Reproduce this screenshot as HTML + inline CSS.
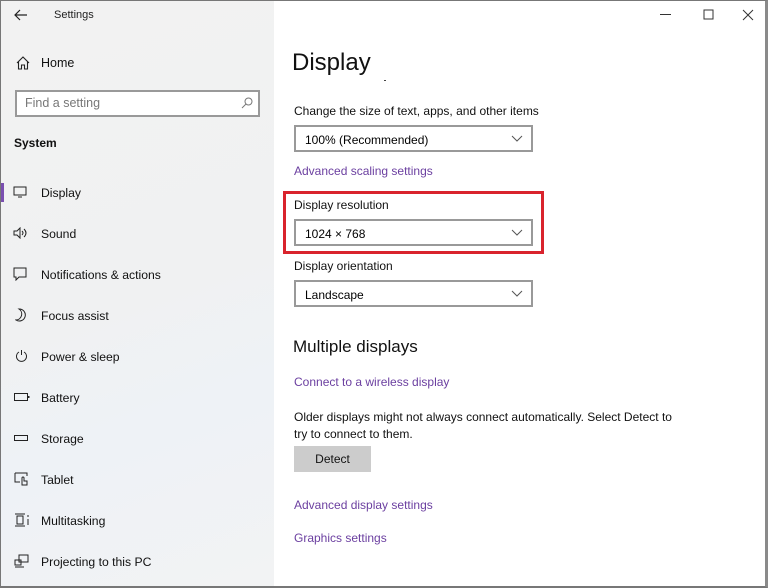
<!DOCTYPE html>
<html><head><style>
*{margin:0;padding:0;box-sizing:border-box}
body{width:768px;height:588px;overflow:hidden;font-family:"Liberation Sans",sans-serif;background:#fff;position:relative;color:#000}
.frame{position:absolute;inset:0;border:1px solid #777;border-right:3px solid #8a8a8a;border-bottom:2px solid #777}
.side{position:absolute;left:1px;top:1px;width:273px;height:585px;background:linear-gradient(160deg,#f2f2f2 0%,#f0f1f2 50%,#eef2f6 70%,#f2f3f4 100%)}
.t{position:absolute;white-space:nowrap}
.nav{position:absolute;left:41px;font-size:12.2px;color:#111}
.ic{position:absolute;left:13px}
.search{position:absolute;left:15px;top:90px;width:245px;height:27px;border:2px solid #999;background:#fff}
.dd{position:absolute;left:294px;width:239px;height:27px;border:2px solid #999;background:#fff;font-size:12px;padding:6px 0 0 9px}
.dd svg{position:absolute;right:8px;top:8px}
.link{position:absolute;left:294px;font-size:12px;color:#6b3fa0}
.lab{position:absolute;left:294px;font-size:12px;color:#111}
</style></head><body>
<div class="side"></div>
<div class="frame"></div>
<svg class="t" style="left:14px;top:9px" width="14" height="12" viewBox="0 0 14 12"><path d="M13 6H1M6 1L1 6l5 5" fill="none" stroke="#222" stroke-width="1.2"/></svg>
<div class="t" style="left:54px;top:9px;font-size:11px;color:#222">Settings</div>
<svg class="t" style="left:660px;top:14px" width="12" height="2"><rect width="11" height="1" fill="#333"/></svg>
<svg class="t" style="left:703px;top:9px" width="12" height="12"><rect x="1" y="1" width="9" height="9" fill="none" stroke="#333"/></svg>
<svg class="t" style="left:742px;top:9px" width="12" height="12"><path d="M1 1l10 10M11 1L1 11" stroke="#333"/></svg>

<svg class="ic" style="top:56px;left:16px" width="14" height="14" viewBox="0 0 14 14"><path d="M1 7L7 1l6 6M2.5 5.5V13h3V9h3v4h3V5.5" fill="none" stroke="#222" stroke-width="1.1"/></svg>
<div class="nav" style="top:56px;font-size:12.5px">Home</div>
<div class="search"><span class="t" style="left:8px;top:4px;font-size:12.5px;color:#777">Find a setting</span>
<svg class="t" style="right:5px;top:5px" width="12" height="12"><circle cx="7.5" cy="4.5" r="3.5" fill="none" stroke="#777"/><path d="M5 7l-4 4" stroke="#777"/></svg></div>
<div class="t" style="left:14px;top:136px;font-size:12px;font-weight:bold;color:#111">System</div>
<div class="t" style="left:1px;top:183px;width:3px;height:19px;background:#7a4fb0"></div>

<svg class="ic" style="top:186px" width="14" height="12"><rect x="1" y="1" width="12" height="8" fill="none" stroke="#222"/><path d="M5 11h4" stroke="#222"/></svg>
<div class="nav" style="top:186px">Display</div>
<svg class="ic" style="top:227px" width="16" height="12"><path d="M1 4h3l3-3v10L4 8H1z M9 4q2 2 0 4M11 2q4 4 0 8" fill="none" stroke="#222"/></svg>
<div class="nav" style="top:227px">Sound</div>
<svg class="ic" style="top:267px" width="14" height="14"><path d="M1 1h12v9H6l-3 3v-3H1z" fill="none" stroke="#222"/></svg>
<div class="nav" style="top:268px">Notifications &amp; actions</div>
<svg class="ic" style="top:308px;left:15px" width="12" height="14"><path d="M4 1a6 6 0 1 1 -3 11a6 6 0 0 0 3 -11z" fill="none" stroke="#222"/></svg>
<div class="nav" style="top:309px">Focus assist</div>
<svg class="ic" style="top:349px;left:15px" width="13" height="14"><path d="M4 3a5 5 0 1 0 5 0M6.5 1v5" fill="none" stroke="#222"/></svg>
<div class="nav" style="top:350px">Power &amp; sleep</div>
<svg class="ic" style="top:393px;left:14px" width="16" height="8"><rect x=".5" y=".5" width="13" height="7" fill="none" stroke="#222"/><rect x="14" y="3" width="1.5" height="2" fill="#222"/></svg>
<div class="nav" style="top:391px">Battery</div>
<svg class="ic" style="top:435px;left:14px" width="15" height="6"><rect x=".5" y=".5" width="13" height="5" fill="none" stroke="#222"/></svg>
<div class="nav" style="top:432px">Storage</div>
<svg class="ic" style="top:472px;left:14px" width="16" height="14"><path d="M1 1h12v3M1 1v9h5" fill="none" stroke="#222"/><path d="M8 13V6a1 1 0 0 1 2 0v3h3v4z" fill="none" stroke="#222"/></svg>
<div class="nav" style="top:473px">Tablet</div>
<svg class="ic" style="top:513px;left:14px" width="16" height="14"><path d="M1 1h10M1 13h10M3 3v8h6V3z" fill="none" stroke="#222"/><path d="M14 2v2M14 6v6" stroke="#222"/></svg>
<div class="nav" style="top:514px">Multitasking</div>
<svg class="ic" style="top:554px;left:14px" width="16" height="14"><path d="M5 1h9v7H5zM1 6h6v5H1zM1 13h9" fill="none" stroke="#222"/></svg>
<div class="nav" style="top:555px">Projecting to this PC</div>

<div class="t" style="left:292px;top:49px;font-size:24px;color:#111">Display</div>
<div class="t" style="left:384px;top:80px;width:2px;height:1px;background:#444"></div>
<div class="lab" style="top:104px">Change the size of text, apps, and other items</div>
<div class="dd" style="top:125px">100% (Recommended)<svg width="12" height="8"><path d="M1 1l5 5 5-5" fill="none" stroke="#555"/></svg></div>
<div class="link" style="top:164px">Advanced scaling settings</div>
<div class="t" style="left:283px;top:191px;width:261px;height:63px;border:3px solid #d9232d"></div>
<div class="lab" style="top:198px">Display resolution</div>
<div class="dd" style="top:219px">1024 × 768<svg width="12" height="8"><path d="M1 1l5 5 5-5" fill="none" stroke="#555"/></svg></div>
<div class="lab" style="top:259px">Display orientation</div>
<div class="dd" style="top:280px">Landscape<svg width="12" height="8"><path d="M1 1l5 5 5-5" fill="none" stroke="#555"/></svg></div>
<div class="t" style="left:293px;top:337px;font-size:17px;color:#111">Multiple displays</div>
<div class="link" style="top:375px">Connect to a wireless display</div>
<div class="lab" style="top:409px;line-height:16.5px">Older displays might not always connect automatically. Select Detect to<br>try to connect to them.</div>
<div class="t" style="left:294px;top:446px;width:77px;height:26px;background:#ccc;font-size:12px;text-align:center;padding-top:6px;color:#111">Detect</div>
<div class="link" style="top:498px">Advanced display settings</div>
<div class="link" style="top:531px">Graphics settings</div>
</body></html>
